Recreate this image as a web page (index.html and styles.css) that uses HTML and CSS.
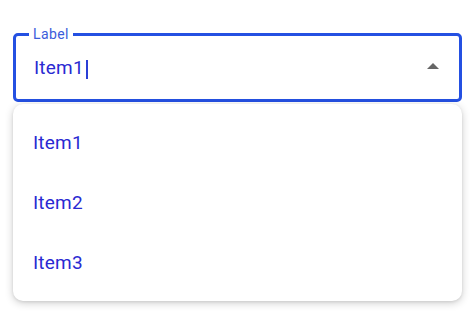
FILE: index.html
```html
<!DOCTYPE html>
<html>
<head>
<meta charset="utf-8">
<link rel="stylesheet" href="styles.css">
</head>
<body>
<div class="select">
  <fieldset class="field">
    <legend class="label">Label</legend>
    <div class="row">
      <span class="value">Item1</span><span class="caret"></span>
      <svg class="arrow" width="12" height="6" viewBox="0 0 12 6"><path d="M0 6 L6 0 L12 6 Z" fill="#666"/></svg>
    </div>
  </fieldset>
  <ul class="menu">
    <li class="item">Item1</li>
    <li class="item">Item2</li>
    <li class="item">Item3</li>
  </ul>
</div>
</body>
</html>
```
FILE: styles.css
```css
html, body {
  margin: 0;
  padding: 0;
  background: #ffffff;
}
body {
  font-family: Roboto, "Liberation Sans", sans-serif;
  width: 474px;
  height: 326px;
  overflow: hidden;
}
.select {
  margin: 26px 12px 0 13px;
}
.field {
  margin: 0;
  padding: 0;
  border: 3px solid #2450e2;
  border-radius: 5px;
  min-width: 0;
}
.label {
  margin-left: 13px;
  padding: 0 4px;
  font-size: 14px;
  line-height: 16px;
  letter-spacing: 0.4px;
  color: #3b5ddb;
}
.row {
  display: flex;
  align-items: center;
  padding: 14px 20px 19px 18px;
  height: 24px;
}
.value {
  font-size: 19px;
  line-height: 24px;
  letter-spacing: 0.2px;
  color: #2a2ad2;
}
.caret {
  display: inline-block;
  width: 2px;
  height: 19px;
  margin-left: 2px;
  margin-top: 2px;
  background: #2a3fd6;
}
.arrow {
  margin-left: auto;
  margin-bottom: 4px;
  display: block;
}
.menu {
  list-style: none;
  margin: 2px 0 0 0;
  padding: 9px 0 8px 0;
  background: #fff;
  border-radius: 10px;
  box-shadow: 0 2px 8px rgba(0, 0, 0, 0.2), 0 1px 3px rgba(0, 0, 0, 0.08);
}
.item {
  height: 60px;
  display: flex;
  align-items: center;
  padding-left: 20px;
  font-size: 19px;
  line-height: 24px;
  letter-spacing: 0.2px;
  color: #2a2ad2;
}
```
